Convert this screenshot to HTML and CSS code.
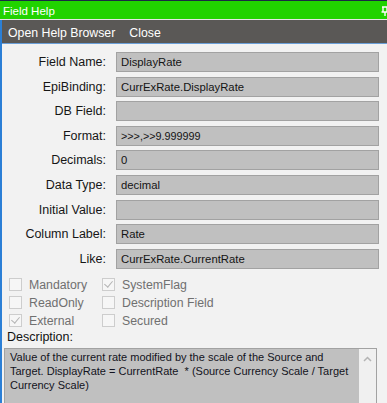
FILE: index.html
```html
<!DOCTYPE html>
<html>
<head>
<meta charset="utf-8">
<link rel="stylesheet" href="styles.css">
</head>
<body>
<div class="titlebar">
  <span class="title">Field Help</span>
  <svg class="pin" width="8" height="10" viewBox="0 0 8 10"><path d="M1 1h6M2 1v5M6 1v5M0.5 6h7M4 6v4" stroke="#fff" stroke-width="1.4" fill="none"/></svg>
</div>
<div class="sep"></div>
<div class="frame">
  <div class="menubar">
    <span class="menu-item">Open Help Browser</span>
    <span class="menu-item">Close</span>
  </div>
  <div class="content">
    <div class="fields">
      <div class="label">Field Name:</div><div class="input">DisplayRate</div>
      <div class="label">EpiBinding:</div><div class="input">CurrExRate.DisplayRate</div>
      <div class="label">DB Field:</div><div class="input"></div>
      <div class="label">Format:</div><div class="input small">&gt;&gt;&gt;,&gt;&gt;9.999999</div>
      <div class="label">Decimals:</div><div class="input">0</div>
      <div class="label">Data Type:</div><div class="input">decimal</div>
      <div class="label">Initial Value:</div><div class="input"></div>
      <div class="label">Column Label:</div><div class="input">Rate</div>
      <div class="label">Like:</div><div class="input">CurrExRate.CurrentRate</div>
    </div>
    <div class="checks">
      <div class="check"><span class="box"></span>Mandatory</div>
      <div class="check"><span class="box checked"></span>SystemFlag</div>
      <div class="check"><span class="box"></span>ReadOnly</div>
      <div class="check"><span class="box"></span>Description Field</div>
      <div class="check"><span class="box checked"></span>External</div>
      <div class="check"><span class="box"></span>Secured</div>
    </div>
    <div class="desc-label">Description:</div>
    <div class="desc">
      <div class="desc-text">Value of the current rate modified by the scale of the Source and Target. DisplayRate = CurrentRate&nbsp; * (Source Currency Scale / Target Currency Scale)</div>
      <div class="scroll"><svg width="9" height="6" viewBox="0 0 9 6"><path d="M1 5L4.5 1.5L8 5" stroke="#b4b4b4" stroke-width="1.5" fill="none"/></svg></div>
    </div>
  </div>
</div>
</body>
</html>
```

FILE: styles.css
```css
html, body {
  margin: 0;
  padding: 0;
}
body {
  width: 387px;
  height: 403px;
  overflow: hidden;
  font-family: "Liberation Sans", Arial, sans-serif;
  background: #f2f2f2;
}
.titlebar {
  height: 18px;
  border-top: 1px solid #1b2a44;
  background: #21d300;
  display: flex;
  align-items: center;
  justify-content: space-between;
  color: #fff;
  font-size: 11.5px;
  padding-left: 3px;
}
.title {
  line-height: 18px;
  padding-top: 1px;
}
.pin {
  margin-right: -2px;
  margin-top: 1px;
}
.sep {
  height: 1px;
  background: #e6e6e6;
}
.frame {
  border-left: 2px solid #2b7fd6;
}
.menubar {
  height: 23px;
  background: #5a5856;
  border-bottom: 1px solid #6a9fd8;
  display: flex;
  align-items: center;
  gap: 14px;
  padding-left: 6px;
  color: #fff;
  font-size: 12.3px;
}
.menu-item {
  padding-top: 2px;
}
.content {
  padding-top: 8px;
}
.fields {
  display: grid;
  grid-template-columns: 104px 263px;
  column-gap: 10px;
  row-gap: 4.6px;
}
.label {
  text-align: right;
  font-size: 12.5px;
  color: #161616;
  line-height: 20px;
}
.input {
  height: 18px;
  background: #c0c0c0;
  border: 1px solid #a2a2a2;
  font-size: 11.3px;
  line-height: 18px;
  padding-left: 4px;
  color: #141414;
}
.input.small {
  font-size: 10.8px;
}
.checks {
  display: grid;
  grid-template-columns: 93px 150px;
  grid-auto-rows: 18px;
  padding-left: 7px;
  margin-top: 7px;
}
.check {
  display: flex;
  align-items: center;
  font-size: 12.3px;
  color: #707070;
}
.box {
  width: 11px;
  height: 11px;
  border: 1px solid #cdcdcd;
  background: #f6f6f6;
  margin-right: 7px;
  position: relative;
}
.box.checked::after {
  content: "";
  position: absolute;
  left: 3px;
  top: 0px;
  width: 4px;
  height: 7px;
  border-right: 1.2px solid #b3b3b3;
  border-bottom: 1.2px solid #b3b3b3;
  transform: rotate(40deg);
}
.desc-label {
  font-size: 12.5px;
  color: #111;
  line-height: 14px;
  padding-left: 5px;
  margin-top: 0px;
}
.desc {
  margin: 4px 0 0 2px;
  width: 371px;
  height: 54px;
  border: 1px solid #a2a2a2;
  border-bottom: none;
  display: flex;
}
.desc-text {
  flex: 1;
  background: #c0c0c0;
  font-size: 11px;
  line-height: 14.3px;
  color: #131320;
  padding: 1px 4px 0 5px;
}
.scroll {
  width: 17px;
  background: #f0f0f0;
  display: flex;
  justify-content: center;
  padding-top: 7px;
  align-items: flex-start;
}
```
